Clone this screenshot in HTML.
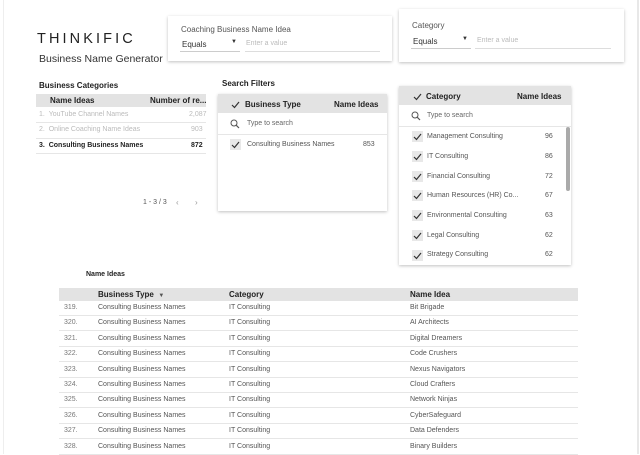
<!DOCTYPE html>
<html><head><meta charset="utf-8"><style>
*{margin:0;padding:0;box-sizing:border-box}
body{width:640px;height:454px;background:#fff;font-family:"Liberation Sans",Arial,sans-serif;position:relative;overflow:hidden;color:#333}
.a{position:absolute;white-space:nowrap}
.card{position:absolute;background:#fff;box-shadow:0 1px 3px rgba(0,0,0,.25)}
.b{font-weight:bold;color:#222}
.s7{font-size:7px}.s8{font-size:8px}
.hd{position:absolute;background:#e3e3e3}
.ln{position:absolute;height:1px;background:#e6e6e6}
.cb{position:absolute;width:11px;height:11px;background:#e8e8e8}
.cb svg,.ck svg{position:absolute;left:1px;top:1px}
.ck{position:absolute;width:11px;height:11px}
</style></head><body>
<div style="position:absolute;left:3px;top:0;width:1px;height:454px;background:#eee"></div>
<div style="position:absolute;left:637px;top:0;width:2px;height:454px;background:#e8e8e8"></div>

<div class="a" style="left:37px;top:31px;font-size:14.5px;letter-spacing:3.1px;color:#222">THINKIFIC</div>
<div class="a" style="left:39px;top:53px;font-size:10.5px;color:#333">Business Name Generator</div>

<div class="card" style="left:168px;top:16px;width:224px;height:45px">
 <div class="a s8" style="left:13px;top:9px;color:#555">Coaching Business Name Idea</div>
 <div class="a s8" style="left:14px;top:24px;color:#333">Equals</div>
 <div class="a" style="left:63px;top:23px;font-size:6px">▼</div>
 <div class="ln" style="left:12px;top:35px;width:60px;background:#ccc"></div>
 <div class="a s7" style="left:78px;top:24px;color:#bbb">Enter a value</div>
 <div class="ln" style="left:77px;top:35px;width:135px;background:#ddd"></div>
</div>
<div class="card" style="left:399px;top:9px;width:225px;height:53px">
 <div class="a s8" style="left:13px;top:12px;color:#555">Category</div>
 <div class="a s8" style="left:14px;top:28px;color:#333">Equals</div>
 <div class="a" style="left:63px;top:27px;font-size:6px">▼</div>
 <div class="ln" style="left:12px;top:39px;width:60px;background:#ccc"></div>
 <div class="a s7" style="left:78px;top:28px;color:#bbb">Enter a value</div>
 <div class="ln" style="left:76px;top:39px;width:136px;background:#ddd"></div>
</div>

<div class="a s8 b" style="left:39px;top:81px">Business Categories</div>
<div class="hd" style="left:36px;top:94px;width:170px;height:13px"></div>
<div class="a s8 b" style="left:50px;top:96px">Name Ideas</div>
<div class="a s8 b" style="left:150px;top:96px">Number of re...</div>
<div class="a s7" style="left:39px;top:111px;color:#bbb">1.&nbsp;&nbsp;YouTube Channel Names</div>
<div class="a s7" style="left:189px;top:111px;color:#bbb">2,087</div>
<div class="ln" style="left:36px;top:122px;width:170px"></div>
<div class="a s7" style="left:39px;top:126px;color:#bbb">2.&nbsp;&nbsp;Online Coaching Name Ideas</div>
<div class="a s7" style="left:191px;top:126px;color:#bbb">903</div>
<div class="ln" style="left:36px;top:138px;width:170px"></div>
<div class="a s7 b" style="left:39px;top:142px">3.&nbsp;&nbsp;Consulting Business Names</div>
<div class="a s7 b" style="left:191px;top:142px">872</div>
<div class="ln" style="left:36px;top:153px;width:170px"></div>
<div class="a s7" style="left:143px;top:199px;color:#555">1 - 3 / 3</div>
<div class="a s8" style="left:176px;top:198px;color:#999">‹</div>
<div class="a s8" style="left:195px;top:198px;color:#999">›</div>

<div class="a s8 b" style="left:222px;top:79px">Search Filters</div>
<div class="card" style="left:218px;top:94px;width:169px;height:117px">
 <div class="hd" style="left:0;top:0;width:169px;height:19px"></div>
 <div class="ck" style="left:12px;top:5px"><svg width="9" height="9"><path d="M1 5l2.5 2.5L8 2" stroke="#333" stroke-width="1.2" fill="none"/></svg></div>
 <div class="a s8 b" style="left:27px;top:6px">Business Type</div>
 <div class="a s8 b" style="left:116px;top:6px">Name Ideas</div>
 <svg class="a" style="left:12px;top:25px" width="10" height="10"><circle cx="4" cy="4" r="3" stroke="#555" fill="none"/><path d="M6.3 6.3L9 9" stroke="#555" stroke-width="1.2"/></svg>
 <div class="a s7" style="left:29px;top:26px;color:#666">Type to search</div>
 <div class="ln" style="left:0;top:40px;width:169px"></div>
 <div class="cb" style="left:12px;top:45px"><svg width="9" height="9"><path d="M1 5l2.5 2.5L8 2" stroke="#333" stroke-width="1.2" fill="none"/></svg></div>
 <div class="a s7" style="left:29px;top:47px;color:#555">Consulting Business Names</div>
 <div class="a s7" style="left:145px;top:47px;color:#555">853</div>
</div>

<div class="card" style="left:399px;top:86px;width:172px;height:179px">
 <div class="hd" style="left:0;top:0;width:172px;height:19px"></div>
 <div class="ck" style="left:13px;top:5px"><svg width="9" height="9"><path d="M1 5l2.5 2.5L8 2" stroke="#333" stroke-width="1.2" fill="none"/></svg></div>
 <div class="a s8 b" style="left:27px;top:6px">Category</div>
 <div class="a s8 b" style="left:118px;top:6px">Name Ideas</div>
 <svg class="a" style="left:12px;top:25px" width="10" height="10"><circle cx="4" cy="4" r="3" stroke="#555" fill="none"/><path d="M6.3 6.3L9 9" stroke="#555" stroke-width="1.2"/></svg>
 <div class="a s7" style="left:28px;top:26px;color:#666">Type to search</div>
 <div class="ln" style="left:0;top:40px;width:172px"></div>
 <div style="position:absolute;left:167px;top:41px;width:4px;height:64px;background:#aaa;border-radius:2px"></div>
 <div style="position:absolute;left:0;top:1px">
 <div class="cb" style="left:13px;top:44px"><svg width="9" height="9"><path d="M1 5l2.5 2.5L8 2" stroke="#333" stroke-width="1.2" fill="none"/></svg></div><div class="a s7" style="left:28px;top:46px;color:#555">Management Consulting</div><div class="a s7" style="left:146px;top:46px;color:#555">96</div>
 <div class="cb" style="left:13px;top:64px"><svg width="9" height="9"><path d="M1 5l2.5 2.5L8 2" stroke="#333" stroke-width="1.2" fill="none"/></svg></div><div class="a s7" style="left:28px;top:66px;color:#555">IT Consulting</div><div class="a s7" style="left:146px;top:66px;color:#555">86</div>
 <div class="cb" style="left:13px;top:84px"><svg width="9" height="9"><path d="M1 5l2.5 2.5L8 2" stroke="#333" stroke-width="1.2" fill="none"/></svg></div><div class="a s7" style="left:28px;top:86px;color:#555">Financial Consulting</div><div class="a s7" style="left:146px;top:86px;color:#555">72</div>
 <div class="cb" style="left:13px;top:103px"><svg width="9" height="9"><path d="M1 5l2.5 2.5L8 2" stroke="#333" stroke-width="1.2" fill="none"/></svg></div><div class="a s7" style="left:28px;top:105px;color:#555">Human Resources (HR) Co...</div><div class="a s7" style="left:146px;top:105px;color:#555">67</div>
 <div class="cb" style="left:13px;top:123px"><svg width="9" height="9"><path d="M1 5l2.5 2.5L8 2" stroke="#333" stroke-width="1.2" fill="none"/></svg></div><div class="a s7" style="left:28px;top:125px;color:#555">Environmental Consulting</div><div class="a s7" style="left:146px;top:125px;color:#555">63</div>
 <div class="cb" style="left:13px;top:143px"><svg width="9" height="9"><path d="M1 5l2.5 2.5L8 2" stroke="#333" stroke-width="1.2" fill="none"/></svg></div><div class="a s7" style="left:28px;top:145px;color:#555">Legal Consulting</div><div class="a s7" style="left:146px;top:145px;color:#555">62</div>
 <div class="cb" style="left:13px;top:163px"><svg width="9" height="9"><path d="M1 5l2.5 2.5L8 2" stroke="#333" stroke-width="1.2" fill="none"/></svg></div><div class="a s7" style="left:28px;top:164px;color:#555">Strategy Consulting</div><div class="a s7" style="left:146px;top:164px;color:#555">62</div>
 </div>
</div>

<div class="a s7 b" style="left:86px;top:271px">Name Ideas</div>
<div class="hd" style="left:59px;top:288px;width:519px;height:13px"></div>
<div class="a s8 b" style="left:98px;top:290px">Business Type&nbsp;&nbsp;<span style="font-size:6px;color:#555">▼</span></div>
<div class="a s8 b" style="left:229px;top:290px">Category</div>
<div class="a s8 b" style="left:410px;top:290px">Name Idea</div>

<div style="position:absolute;left:0;top:304px">
<div class="a s7" style="left:64px;top:0;color:#777">319.</div><div class="a s7" style="left:98px;top:0;color:#555">Consulting Business Names</div><div class="a s7" style="left:229px;top:0;color:#555">IT Consulting</div><div class="a s7" style="left:410px;top:0;color:#555">Bit Brigade</div>
<div class="ln" style="left:59px;top:11px;width:519px"></div>
</div>
<div style="position:absolute;left:0;top:319.4px">
<div class="a s7" style="left:64px;top:0;color:#777">320.</div><div class="a s7" style="left:98px;top:0;color:#555">Consulting Business Names</div><div class="a s7" style="left:229px;top:0;color:#555">IT Consulting</div><div class="a s7" style="left:410px;top:0;color:#555">AI Architects</div>
<div class="ln" style="left:59px;top:11px;width:519px"></div>
</div>
<div style="position:absolute;left:0;top:334.8px">
<div class="a s7" style="left:64px;top:0;color:#777">321.</div><div class="a s7" style="left:98px;top:0;color:#555">Consulting Business Names</div><div class="a s7" style="left:229px;top:0;color:#555">IT Consulting</div><div class="a s7" style="left:410px;top:0;color:#555">Digital Dreamers</div>
<div class="ln" style="left:59px;top:11px;width:519px"></div>
</div>
<div style="position:absolute;left:0;top:350.2px">
<div class="a s7" style="left:64px;top:0;color:#777">322.</div><div class="a s7" style="left:98px;top:0;color:#555">Consulting Business Names</div><div class="a s7" style="left:229px;top:0;color:#555">IT Consulting</div><div class="a s7" style="left:410px;top:0;color:#555">Code Crushers</div>
<div class="ln" style="left:59px;top:11px;width:519px"></div>
</div>
<div style="position:absolute;left:0;top:365.6px">
<div class="a s7" style="left:64px;top:0;color:#777">323.</div><div class="a s7" style="left:98px;top:0;color:#555">Consulting Business Names</div><div class="a s7" style="left:229px;top:0;color:#555">IT Consulting</div><div class="a s7" style="left:410px;top:0;color:#555">Nexus Navigators</div>
<div class="ln" style="left:59px;top:11px;width:519px"></div>
</div>
<div style="position:absolute;left:0;top:381px">
<div class="a s7" style="left:64px;top:0;color:#777">324.</div><div class="a s7" style="left:98px;top:0;color:#555">Consulting Business Names</div><div class="a s7" style="left:229px;top:0;color:#555">IT Consulting</div><div class="a s7" style="left:410px;top:0;color:#555">Cloud Crafters</div>
<div class="ln" style="left:59px;top:11px;width:519px"></div>
</div>
<div style="position:absolute;left:0;top:396.4px">
<div class="a s7" style="left:64px;top:0;color:#777">325.</div><div class="a s7" style="left:98px;top:0;color:#555">Consulting Business Names</div><div class="a s7" style="left:229px;top:0;color:#555">IT Consulting</div><div class="a s7" style="left:410px;top:0;color:#555">Network Ninjas</div>
<div class="ln" style="left:59px;top:11px;width:519px"></div>
</div>
<div style="position:absolute;left:0;top:411.8px">
<div class="a s7" style="left:64px;top:0;color:#777">326.</div><div class="a s7" style="left:98px;top:0;color:#555">Consulting Business Names</div><div class="a s7" style="left:229px;top:0;color:#555">IT Consulting</div><div class="a s7" style="left:410px;top:0;color:#555">CyberSafeguard</div>
<div class="ln" style="left:59px;top:11px;width:519px"></div>
</div>
<div style="position:absolute;left:0;top:427.2px">
<div class="a s7" style="left:64px;top:0;color:#777">327.</div><div class="a s7" style="left:98px;top:0;color:#555">Consulting Business Names</div><div class="a s7" style="left:229px;top:0;color:#555">IT Consulting</div><div class="a s7" style="left:410px;top:0;color:#555">Data Defenders</div>
<div class="ln" style="left:59px;top:11px;width:519px"></div>
</div>
<div style="position:absolute;left:0;top:442.6px">
<div class="a s7" style="left:64px;top:0;color:#777">328.</div><div class="a s7" style="left:98px;top:0;color:#555">Consulting Business Names</div><div class="a s7" style="left:229px;top:0;color:#555">IT Consulting</div><div class="a s7" style="left:410px;top:0;color:#555">Binary Builders</div>
<div class="ln" style="left:59px;top:11px;width:519px"></div>
</div>
</body></html>
